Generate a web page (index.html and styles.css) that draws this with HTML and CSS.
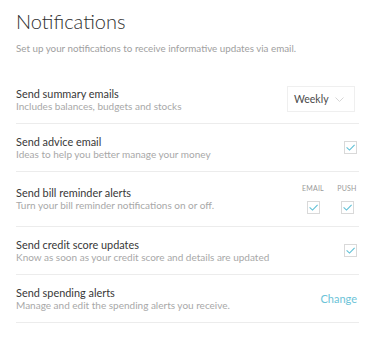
FILE: index.html
```html
<!DOCTYPE html>
<html>
<head>
<meta charset="utf-8">
<link rel="stylesheet" href="styles.css">
</head>
<body>
<div class="page">
  <h1 class="title">Notifications</h1>
  <p class="intro">Set up your notifications to receive informative updates via email.</p>

  <div class="list">
    <div class="row row-first">
      <div class="text">
        <div class="name">Send summary emails</div>
        <div class="desc">Includes balances, budgets and stocks</div>
      </div>
      <div class="select">
        <span class="select-value">Weekly</span>
        <svg class="chevron" width="9" height="5" viewBox="0 0 9 5"><path d="M0.5 0.5 L4.5 4.5 L8.5 0.5" fill="none" stroke="#d6d6d6" stroke-width="1"/></svg>
      </div>
    </div>

    <div class="row">
      <div class="text">
        <div class="name">Send advice email</div>
        <div class="desc">Ideas to help you better manage your money</div>
      </div>
      <span class="check"><svg width="11" height="11" viewBox="0 0 11 11"><path d="M1.6 5.4 L4.5 8.1 L9.6 2.8" fill="none" stroke="#5fc0d6" stroke-width="1.1"/></svg></span>
    </div>

    <div class="row row-tall">
      <div class="text">
        <div class="name">Send bill reminder alerts</div>
        <div class="desc">Turn your bill reminder notifications on or off.</div>
      </div>
      <div class="channels">
        <div class="channel">
          <span class="channel-label">EMAIL</span>
          <span class="check"><svg width="11" height="11" viewBox="0 0 11 11"><path d="M1.6 5.4 L4.5 8.1 L9.6 2.8" fill="none" stroke="#5fc0d6" stroke-width="1.1"/></svg></span>
        </div>
        <div class="channel">
          <span class="channel-label">PUSH</span>
          <span class="check"><svg width="11" height="11" viewBox="0 0 11 11"><path d="M1.6 5.4 L4.5 8.1 L9.6 2.8" fill="none" stroke="#5fc0d6" stroke-width="1.1"/></svg></span>
        </div>
      </div>
    </div>

    <div class="row">
      <div class="text">
        <div class="name">Send credit score updates</div>
        <div class="desc">Know as soon as your credit score and details are updated</div>
      </div>
      <span class="check"><svg width="11" height="11" viewBox="0 0 11 11"><path d="M1.6 5.4 L4.5 8.1 L9.6 2.8" fill="none" stroke="#5fc0d6" stroke-width="1.1"/></svg></span>
    </div>

    <div class="row">
      <div class="text">
        <div class="name">Send spending alerts</div>
        <div class="desc">Manage and edit the spending alerts you receive.</div>
      </div>
      <a class="link">Change</a>
    </div>
  </div>
</div>
</body>
</html>
```

FILE: styles.css
```css
html, body {
  margin: 0;
  padding: 0;
  background: #ffffff;
}

body {
  font-family: "Lato", "Open Sans", "Liberation Sans", sans-serif;
  color: #333333;
}

.page {
  width: 343px;
  padding: 9px 0 0 16px;
}

.title {
  margin: 0;
  font-size: 20px;
  line-height: 24px;
  font-weight: 300;
  color: #2e2e2e;
}

.intro {
  margin: 9px 0 0 0;
  font-size: 9.8px;
  line-height: 12px;
  color: #a0a0a0;
}

.list {
  margin-top: 21px;
}

.row {
  display: flex;
  align-items: center;
  justify-content: space-between;
  padding: 11px 0;
  min-height: 25px;
  border-bottom: 1px solid #ececec;
}

.row-tall {
  padding: 11px 0 12px 0;
}

.text {
  display: flex;
  flex-direction: column;
}

.name {
  font-size: 10.9px;
  line-height: 13px;
  color: #383838;
}

.desc {
  font-size: 10px;
  line-height: 12px;
  color: #a8a8a8;
}

.select {
  width: 68px;
  height: 26px;
  box-sizing: border-box;
  border: 1px solid #efefef;
  display: flex;
  align-items: center;
  justify-content: space-between;
  padding: 0 10px 0 6px;
  margin-right: 4px;
}

.select-value {
  font-size: 10.5px;
  color: #4a4a4a;
}

.chevron {
  display: block;
}

.check {
  width: 13px;
  height: 13px;
  box-sizing: border-box;
  border: 1px solid #d9d9d9;
  display: flex;
  align-items: center;
  justify-content: center;
  margin-right: 2px;
}

.check svg {
  display: block;
}

.channels {
  display: flex;
  gap: 14px;
  margin-right: 2px;
}

.channel {
  width: 20px;
  display: flex;
  flex-direction: column;
  align-items: center;
  gap: 8px;
}

.channel .check {
  margin-right: 0;
}

.channel-label {
  font-size: 7px;
  line-height: 10px;
  color: #9a9a9a;
  letter-spacing: 0.2px;
}

.link {
  font-size: 11px;
  color: #6cc3d8;
  margin-right: 2px;
}
```
